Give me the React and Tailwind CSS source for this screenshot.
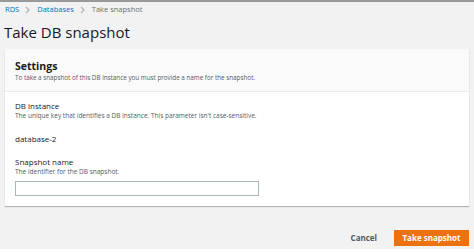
import React from 'react';

const Crumb = ({ children, link }) => (
  <span className={link ? 'text-[#0073bb]' : 'text-[#687078]'}>{children}</span>
);

const Sep = () => (
  <svg width="6" height="8" viewBox="0 0 6 8" className="mx-[6px]">
    <path d="M1 1l3 3-3 3" fill="none" stroke="#aab7b8" strokeWidth="1.2" />
  </svg>
);

const App = () => {
  return (
    <div
      className="w-[474px] h-[252px] bg-white overflow-hidden"
      style={{ fontFamily: '"Open Sans", "Liberation Sans", sans-serif' }}
    >
      <div className="h-[2px] bg-[#999]" />
      <div className="h-[247px] bg-[#f2f2f2] px-[5px] pt-[2px]">
        {/* breadcrumb */}
        <div className="flex items-center text-[7.5px] h-[12px]">
          <Crumb link>RDS</Crumb>
          <Sep />
          <Crumb link>Databases</Crumb>
          <Sep />
          <Crumb>Take snapshot</Crumb>
        </div>
        <h1 className="text-[15px] leading-[20px] text-[#16191f] mt-[6px] -ml-[1px]">Take DB snapshot</h1>

        {/* card */}
        <div className="mt-[7px] w-[464px] bg-white shadow-[0_1px_1px_rgba(0,0,0,0.25)]">
          <div className="bg-[#fafafa] border-b border-[#eaeded] px-[10px] pt-[10px] h-[43px]">
            <div className="text-[10.5px] font-bold text-[#16191f] leading-[14px]">Settings</div>
            <div className="text-[6.3px] text-[#545b64] leading-[10px]">
              To take a snapshot of this DB instance you must provide a name for the snapshot.
            </div>
          </div>
          <div className="px-[10px] pt-[8px] pb-[10px]">
            <div className="text-[8px] text-[#16191f] leading-[11px]">DB instance</div>
            <div className="text-[6.5px] text-[#545b64] leading-[9px]">
              The unique key that identifies a DB instance. This parameter isn't case-sensitive.
            </div>
            <div className="text-[8px] text-[#16191f] leading-[11px] mt-[13px]">database-2</div>
            <div className="text-[8px] text-[#16191f] leading-[11px] mt-[12px]">Snapshot name</div>
            <div className="text-[6.5px] text-[#545b64] leading-[9px]">The identifier for the DB snapshot.</div>
            <div className="mt-[5px] w-[244px] h-[15px] border border-[#aab7b8] bg-white" />
          </div>
        </div>

        {/* actions */}
        <div className="flex justify-end items-center mt-[24px]">
          <span className="text-[8px] font-bold text-[#545b64] mr-[17px]">Cancel</span>
          <div className="w-[75px] h-[16px] bg-[#ec7211] flex items-center justify-center text-[8px] font-bold text-white">
            Take snapshot
          </div>
        </div>
      </div>
    </div>
  );
};

export default App;
